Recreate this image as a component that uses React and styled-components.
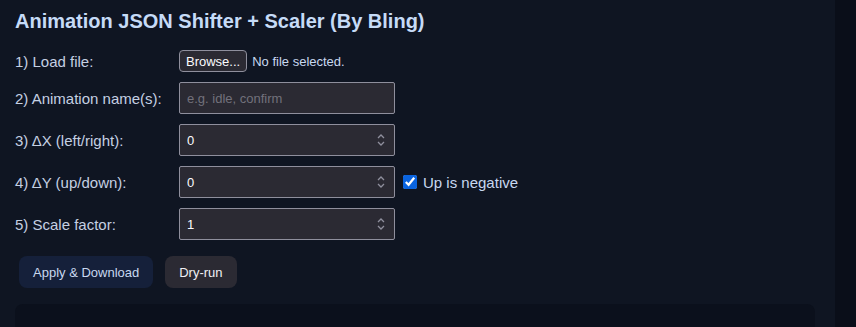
import styled, { createGlobalStyle } from "styled-components"

const Global = createGlobalStyle`
  html, body {
    margin: 0;
    background: #0a0e19;
    font-family: "Liberation Sans", Arial, sans-serif;
    color-scheme: dark;
  }
`

const Panel = styled.section`
  width: 835px;
  box-sizing: border-box;
  min-height: 327px;
  padding: 0 20px 0 15px;
  background: #0f1522;
  overflow: hidden;
`

const Title = styled.h1`
  margin: 0;
  padding: 9px 0 17px;
  font-size: 20px;
  line-height: 24px;
  font-weight: 700;
  color: #c6dbf7;
`

const Form = styled.div`
  display: grid;
  grid-template-columns: 164px auto 1fr;
  row-gap: 10px;
  align-items: center;
`

const Label = styled.div`
  font-size: 15px;
  color: #c5d0e2;
`

const FileRow = styled.label`
  display: flex;
  align-items: center;
  gap: 5px;
  grid-column: span 2;
  font-size: 13px;
  color: #c8d8f0;
  cursor: pointer;
  input { display: none; }
`

const BrowseButton = styled.span`
  display: inline-flex;
  align-items: center;
  height: 22px;
  box-sizing: border-box;
  padding: 0 6px;
  border: 1px solid #8f8f9d;
  border-radius: 4px;
  background: #2b2a33;
  color: #fbfbfe;
  font-size: 13px;
`

const Field = styled.div`
  display: flex;
  align-items: center;
  width: 216px;
  height: 32px;
  box-sizing: border-box;
  border: 1px solid #8f8f9d;
  border-radius: 2px;
  background: #2b2a33;
  padding: 0 8px 0 7px;
  grid-column: ${p => (p.$wide ? "span 2" : "auto")};
`

const TextInput = styled.input`
  flex: 1;
  min-width: 0;
  border: none;
  outline: none;
  background: transparent;
  color: #fbfbfe;
  font-family: "Liberation Sans", Arial, sans-serif;
  font-size: 13px;
  padding: 0;
  &::placeholder { color: #72717b; }
  &::-webkit-outer-spin-button,
  &::-webkit-inner-spin-button { -webkit-appearance: none; margin: 0; }
  -moz-appearance: textfield;
`

const Check = styled.label`
  display: flex;
  align-items: center;
  gap: 6px;
  margin-left: 8px;
  font-size: 15px;
  color: #c8d8f0;
  input {
    width: 14px;
    height: 14px;
    margin: 0;
    accent-color: #0a64e0;
  }
`

const Actions = styled.div`
  display: flex;
  gap: 12px;
  padding: 16px 4px;
`

const Button = styled.button`
  height: 32px;
  padding: 0 14px;
  border: none;
  border-radius: 8px;
  font-family: "Liberation Sans", Arial, sans-serif;
  font-size: 13px;
  font-weight: 400;
  background: ${p => (p.$primary ? "#15203a" : "#2b2a33")};
  color: ${p => (p.$primary ? "#c8d8f0" : "#f0f0f4")};
  cursor: pointer;
`

const Log = styled.pre`
  margin: 0;
  height: 60px;
  border-radius: 8px;
  background: #0b101c;
`

const Spinner = () => (
  <svg width="10" height="14" viewBox="0 0 10 14" fill="none" stroke="#8f8f9d" strokeWidth="1.3">
    <path d="M2 5 L5 2 L8 5" />
    <path d="M2 9 L5 12 L8 9" />
  </svg>
)

const NumberField = ({ value }) => (
  <Field>
    <TextInput type="number" defaultValue={value} />
    <Spinner />
  </Field>
)

export default function App() {
  return (
    <>
      <Global />
      <Panel>
        <Title>Animation JSON Shifter + Scaler (By Bling)</Title>
        <Form>
          <Label>1) Load file:</Label>
          <FileRow>
            <BrowseButton>Browse...</BrowseButton>
            No file selected.
            <input type="file" />
          </FileRow>

          <Label>2) Animation name(s):</Label>
          <Field $wide>
            <TextInput placeholder="e.g. idle, confirm" />
          </Field>

          <Label>3) ΔX (left/right):</Label>
          <NumberField value={0} />
          <div />

          <Label>4) ΔY (up/down):</Label>
          <NumberField value={0} />
          <Check>
            <input type="checkbox" defaultChecked />
            Up is negative
          </Check>

          <Label>5) Scale factor:</Label>
          <NumberField value={1} />
          <div />
        </Form>
        <Actions>
          <Button $primary>Apply &amp; Download</Button>
          <Button>Dry-run</Button>
        </Actions>
        <Log />
      </Panel>
    </>
  )
}
